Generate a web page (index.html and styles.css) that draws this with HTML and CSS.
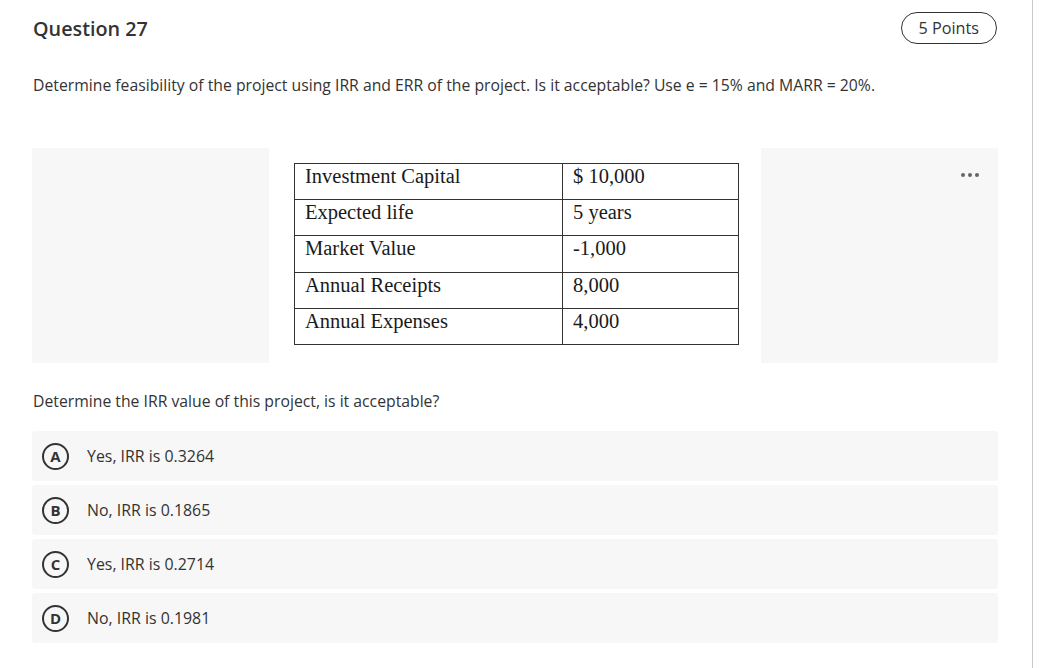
FILE: index.html
```html
<!DOCTYPE html>
<html>
<head>
<meta charset="utf-8">
<link rel="stylesheet" href="styles.css">
</head>
<body>
<div class="page">
  <div class="content">
    <div class="header">
      <h1 class="title">Question 27</h1>
      <span class="points">5 Points</span>
    </div>
    <p class="prompt">Determine feasibility of the project using IRR and ERR of the project. Is it acceptable? Use e = 15% and MARR = 20%.</p>
    <div class="figure">
      <div class="figure-image">
        <table class="data">
          <tr><td class="label">Investment Capital</td><td class="value">$ 10,000</td></tr>
          <tr><td class="label">Expected life</td><td class="value">5 years</td></tr>
          <tr><td class="label">Market Value</td><td class="value">-1,000</td></tr>
          <tr><td class="label">Annual Receipts</td><td class="value">8,000</td></tr>
          <tr><td class="label">Annual Expenses</td><td class="value">4,000</td></tr>
        </table>
      </div>
      <span class="more"><i></i><i></i><i></i></span>
    </div>
    <p class="sub">Determine the IRR value of this project, is it acceptable?</p>
    <div class="options">
      <div class="option"><span class="letter">A</span><span class="text">Yes, IRR is 0.3264</span></div>
      <div class="option"><span class="letter">B</span><span class="text">No, IRR is 0.1865</span></div>
      <div class="option"><span class="letter">C</span><span class="text">Yes, IRR is 0.2714</span></div>
      <div class="option"><span class="letter">D</span><span class="text">No, IRR is 0.1981</span></div>
    </div>
  </div>
</div>
</body>
</html>
```
FILE: styles.css
```css
html, body {
  margin: 0;
  padding: 0;
  background: #fff;
}
body {
  font-family: "Open Sans", "Noto Sans", sans-serif;
  color: #333;
}
.page {
  width: 1033px;
  height: 668px;
  border-right: 1px solid #c9c9c9;
  box-sizing: border-box;
  overflow: hidden;
}
.content {
  width: 966px;
  margin-left: 32px;
  padding-top: 12px;
}
.header {
  display: flex;
  align-items: center;
  justify-content: space-between;
  height: 32px;
}
.title {
  margin: 0 0 0 1px;
  font-size: 19.8px;
  font-weight: 600;
  color: #333;
}
.points {
  display: inline-flex;
  align-items: center;
  justify-content: center;
  height: 32px;
  box-sizing: border-box;
  padding: 0 17px;
  border: 1px solid #333;
  border-radius: 16px;
  font-size: 16.2px;
  color: #333;
  margin-right: 1px;
}
.prompt {
  margin: 31px 0 0 1px;
  font-size: 15.75px;
  line-height: 20px;
}
.figure {
  position: relative;
  margin-top: 53px;
  height: 215px;
  background: #f7f7f7;
  display: flex;
  justify-content: center;
}
.figure-image {
  width: 492px;
  height: 215px;
  background: #fff;
  box-sizing: border-box;
  padding: 15px 0 0 25px;
}
.data {
  border-collapse: collapse;
  font-family: "Liberation Serif", "Times New Roman", serif;
  font-size: 20.5px;
  line-height: 24px;
  color: #1a1a1a;
}
.data td {
  border: 1.5px solid #333;
  height: 36.2px;
  padding: 0 10px;
  box-sizing: border-box;
  vertical-align: top;
}
.data .label {
  width: 268px;
}
.data .value {
  width: 176px;
}
.more {
  position: absolute;
  top: 25px;
  right: 19px;
  display: flex;
  gap: 3px;
}
.more i {
  display: block;
  width: 4px;
  height: 4px;
  border-radius: 50%;
  background: #666;
}
.sub {
  margin: 28px 0 0 1px;
  font-size: 15.75px;
  line-height: 20px;
}
.options {
  margin-top: 20px;
  display: flex;
  flex-direction: column;
  gap: 4px;
}
.option {
  display: flex;
  align-items: center;
  height: 50px;
  background: #f7f7f7;
  border-radius: 3px;
  padding-left: 10px;
}
.letter {
  display: inline-flex;
  align-items: center;
  justify-content: center;
  flex: none;
  width: 27px;
  height: 27px;
  box-sizing: border-box;
  border: 2px solid #333;
  border-radius: 50%;
  font-size: 15px;
  font-weight: 700;
  color: #333;
}
.text {
  margin-left: 18px;
  font-size: 15.9px;
}
```
